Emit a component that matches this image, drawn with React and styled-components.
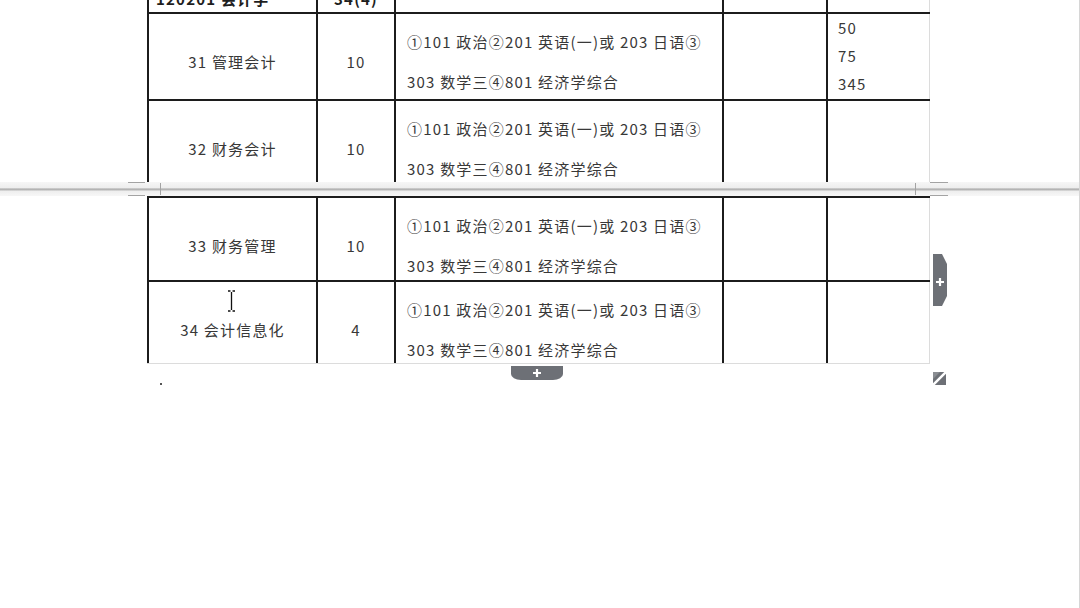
import React from 'react'
import styled, { createGlobalStyle } from 'styled-components'

const GlobalStyle = createGlobalStyle`
    html, body {
        margin: 0;
        padding: 0;
        background: #fff;
    }
    body {
        font-family: "Noto Sans CJK SC", "Noto Sans", sans-serif;
        color: #333;
        overflow: hidden;
    }
`

const Doc = styled.div`
    width: 1080px;
    height: 608px;
    box-sizing: border-box;
    border-right: 1px solid #d6d6d6;
    background: #fff;
`

const PageClip = styled.div`
    height: 182px;
    overflow: hidden;
`

const Table = styled.div`
    position: relative;
    margin-left: 147px;
    margin-top: ${(p) => p.$shift || 0}px;
    width: 783px;
`

const Row = styled.div`
    display: grid;
    grid-template-columns: 169px 78px 328px 104px 104px;
    grid-template-rows: 100%;
    height: ${(p) => p.$h}px;
    border-top: ${(p) => (p.$first ? 'none' : '2px solid #1c1c1c')};
    border-bottom: ${(p) => (p.$last ? '1px solid #dcdcdc' : 'none')};
`

const Cell = styled.div`
    box-sizing: border-box;
    min-height: 0;
    border-left: 2px solid #1c1c1c;
    font-size: 15px;
    letter-spacing: 1.2px;
    color: #383838;
    display: flex;
    flex-direction: column;
    align-items: ${(p) => (p.$left ? 'flex-start' : 'center')};
    justify-content: ${(p) => (p.$top ? 'flex-start' : 'center')};
    padding-left: ${(p) => p.$pad || 0}px;
    padding-top: ${(p) => p.$pt || 0}px;
    line-height: ${(p) => p.$lh || 40}px;
    white-space: nowrap;
`

const LastCell = styled(Cell)`
    border-right: 1px solid #dcdcdc;
`

const HeadCell = styled(Cell)`
    font-weight: 700;
    color: #1e1e1e;
    justify-content: flex-end;
    line-height: 20px;
    padding-bottom: 3px;
`

const HeadLast = styled(HeadCell)`
    border-right: 1px solid #dcdcdc;
`

const Mid = styled.div`
    height: 80px;
    flex-shrink: 0;
    display: flex;
    align-items: center;
    line-height: 20px;
`

const PageGap = styled.div`
    position: relative;
    height: 14px;
    background: linear-gradient(#f6f6f6, #eeeeee 40%, #b4b4b4 50%, #b4b4b4 57%, #eeeeee 64%, #f7f7f7);
`

const Mark = styled.div`
    position: absolute;
    background: #a3a3a3;
    left: ${(p) => p.$x}px;
    top: ${(p) => p.$y}px;
    width: ${(p) => p.$w}px;
    height: ${(p) => p.$h}px;
`

const BottomTab = styled.div`
    position: absolute;
    left: 364px;
    top: 170px;
    width: 52px;
    height: 14px;
    background: #6d7076;
    border-radius: 0 0 10px 10px / 0 0 6px 6px;
    color: #fff;
    display: flex;
    align-items: center;
    justify-content: center;
`

const SideTab = styled.div`
    position: absolute;
    left: 786px;
    top: 58px;
    width: 14px;
    height: 52px;
`

const Resize = styled.div`
    position: absolute;
    left: 786px;
    top: 170px;
    width: 13px;
    height: 13px;
`

const Cursor = styled.div`
    position: absolute;
    left: 80px;
    top: 94px;
    width: 9px;
    height: 22px;
`

const Dot = styled.div`
    margin: 19px 0 0 160px;
    width: 2px;
    height: 2px;
    background: #555;
`

const Plus = () => (
    <svg width="10" height="10" viewBox="0 0 10 10">
        <path d="M5 1v8M1 5h8" stroke="#fff" strokeWidth="2.2" />
    </svg>
)

const Line2 = () => (
    <>
        <div>①101 政治②201 英语(一)或 203 日语③</div>
        <div>303 数学三④801 经济学综合</div>
    </>
)

const DataRow = ({ h, name, num, scores, last }) => (
    <Row $h={h} $last={last}>
        <Cell $top $pt={8}><Mid>{name}</Mid></Cell>
        <Cell $top $pt={8}><Mid>{num}</Mid></Cell>
        <Cell $left $top $pad={11} $pt={8}><Line2 /></Cell>
        <Cell />
        <LastCell $left $top $pad={10} $lh={28}>
            {scores && scores.map((s) => <div key={s}>{s}</div>)}
        </LastCell>
    </Row>
)

const App = () => {
    return (
        <Doc>
            <GlobalStyle />
            <PageClip>
                <Table $shift={-28}>
                    <Row $h={40} $first>
                        <HeadCell $left $pad={7}>120201 会计学</HeadCell>
                        <HeadCell>34(4)</HeadCell>
                        <HeadCell />
                        <HeadCell />
                        <HeadLast />
                    </Row>
                    <DataRow h={85} name="31 管理会计" num="10" scores={['50', '75', '345']} />
                    <DataRow h={100} name="32 财务会计" num="10" />
                </Table>
            </PageClip>
            <PageGap>
                <Mark $x={128} $y={0} $w={17} $h={1} />
                <Mark $x={128} $y={13} $w={17} $h={1} />
                <Mark $x={160} $y={1} $w={1} $h={12} />
                <Mark $x={930} $y={0} $w={18} $h={1} />
                <Mark $x={930} $y={13} $w={18} $h={1} />
                <Mark $x={915} $y={1} $w={1} $h={12} />
            </PageGap>
            <Table>
                <DataRow h={82} name="33 财务管理" num="10" />
                <DataRow h={81} name="34 会计信息化" num="4" last />
                <BottomTab><Plus /></BottomTab>
                <SideTab>
                    <svg width="14" height="52" viewBox="0 0 14 52">
                        <path d="M0 0H9L14 10V42L9 52H0Z" fill="#6d7076" />
                        <path d="M7 24v8M3 28h8" stroke="#fff" strokeWidth="2.2" />
                    </svg>
                </SideTab>
                <Resize>
                    <svg width="13" height="13" viewBox="0 0 13 13">
                        <rect width="13" height="13" fill="#6d7076" />
                        <path d="M0 0H7L0 7Z" fill="#8a8d92" />
                        <path d="M0 13L13 0" stroke="#fff" strokeWidth="2.5" />
                    </svg>
                </Resize>
                <Cursor>
                    <svg width="9" height="22" viewBox="0 0 9 22">
                        <path d="M1 1h2.5M5.5 1H8M4.5 2v18M1 21h2.5M5.5 21H8" stroke="#111" strokeWidth="1.3" fill="none" />
                    </svg>
                </Cursor>
            </Table>
            <Dot />
        </Doc>
    )
}

export default App
